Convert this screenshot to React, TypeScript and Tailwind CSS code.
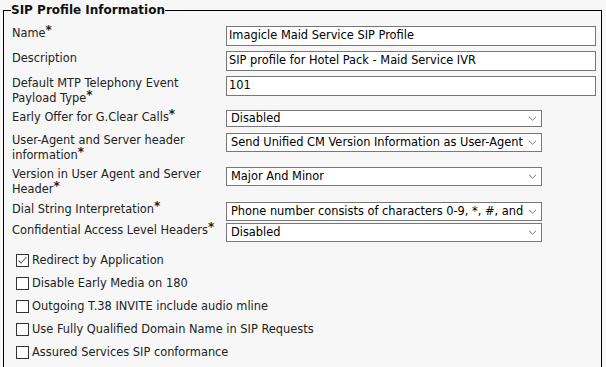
import React from "react";

type Field = {
  label: string[];
  kind: "input" | "select";
  value: string;
  rowH: string;
  ctrlH: string;
};

const fields: Field[] = [
  { label: ["Name"], kind: "input", value: "Imagicle Maid Service SIP Profile", rowH: "h-[25px]", ctrlH: "h-[20px]" },
  { label: ["Description"], kind: "input", value: "SIP profile for Hotel Pack - Maid Service IVR", rowH: "h-[25px]", ctrlH: "h-[20px]" },
  { label: ["Default MTP Telephony Event", "Payload Type"], kind: "input", value: "101", rowH: "h-[34px]", ctrlH: "h-[20px]" },
  { label: ["Early Offer for G.Clear Calls"], kind: "select", value: "Disabled", rowH: "h-[23px]", ctrlH: "h-[17px]" },
  { label: ["User-Agent and Server header", "information"], kind: "select", value: "Send Unified CM Version Information as User-Agent Header", rowH: "h-[34px]", ctrlH: "h-[19px]" },
  { label: ["Version in User Agent and Server", "Header"], kind: "select", value: "Major And Minor", rowH: "h-[35px]", ctrlH: "h-[19px]" },
  { label: ["Dial String Interpretation"], kind: "select", value: "Phone number consists of characters 0-9, *, #, and + (others treated as URI addresses)", rowH: "h-[21px]", ctrlH: "h-[19px]" },
  { label: ["Confidential Access Level Headers"], kind: "select", value: "Disabled", rowH: "h-[30px]", ctrlH: "h-[19px]" },
];

const required = new Set(["Description"]);

const checks = [
  { label: "Redirect by Application", checked: true },
  { label: "Disable Early Media on 180", checked: false },
  { label: "Outgoing T.38 INVITE include audio mline", checked: false },
  { label: "Use Fully Qualified Domain Name in SIP Requests", checked: false },
  { label: "Assured Services SIP conformance", checked: false },
];

const Star = () => (
  <span className="relative -top-[3px] font-bold text-[12px] leading-none">*</span>
);

const Chevron = () => (
  <svg width="9" height="5" viewBox="0 0 9 5" className="shrink-0">
    <path d="M1 0.8 L4.5 4.2 L8 0.8" fill="none" stroke="#777" strokeWidth="1" />
  </svg>
);

const CheckBox = ({ checked }: { checked: boolean }) => (
  <div className="w-[13px] h-[13px] border border-[#333] bg-white shrink-0 flex items-center justify-center">
    {checked && (
      <svg width="11" height="11" viewBox="0 0 11 11">
        <path d="M1.5 5.5 L4 8 L9.5 2" fill="none" stroke="#666" strokeWidth="1.1" />
      </svg>
    )}
  </div>
);

export default function App() {
  return (
    <div
      className="w-[606px] h-[367px] overflow-hidden bg-[#f7f7f7] text-[11.4px] text-[#222]"
      style={{ fontFamily: '"DejaVu Sans", Verdana, sans-serif' }}
    >
      <fieldset className="ml-[3px] mt-[3px] w-[599px] border border-black pl-[7px] pr-0 pb-4">
        <legend className="font-bold text-[12px] leading-[15px] px-0 text-[#111]">
          SIP Profile Information
        </legend>
        <div className="pt-[8px] pl-[1px]">
          {fields.map((f) => (
            <div key={f.label[0]} className={`flex items-start ${f.rowH}`}>
              <div className="w-[214px] leading-[15px]">
                {f.label.map((line, i) => (
                  <div key={line} className="whitespace-nowrap">
                    {line}
                    {i === f.label.length - 1 && !required.has(f.label[0]) && <Star />}
                  </div>
                ))}
              </div>
              {f.kind === "input" ? (
                <div className={`w-[370px] ${f.ctrlH} border border-[#777] bg-white pl-[2px] flex items-center text-black whitespace-nowrap overflow-hidden`}>
                  {f.value}
                </div>
              ) : (
                <div className={`w-[316px] ${f.ctrlH} border border-[#777] bg-white pl-[4px] pr-[4px] flex items-center text-black`}>
                  <div className="flex-1 overflow-hidden whitespace-nowrap mr-[3px]">{f.value}</div>
                  <Chevron />
                </div>
              )}
            </div>
          ))}
          <div className="pl-[4px]">
            {checks.map((c) => (
              <div key={c.label} className="flex items-start h-[23px] gap-[3px]">
                <div className="pt-[1px]">
                  <CheckBox checked={c.checked} />
                </div>
                <span className="leading-[15px]">{c.label}</span>
              </div>
            ))}
          </div>
        </div>
      </fieldset>
    </div>
  );
}
